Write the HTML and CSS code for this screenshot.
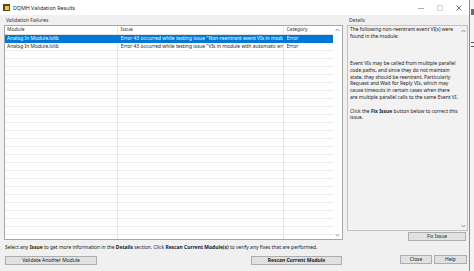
FILE: index.html
```html
<!DOCTYPE html>
<html lang="en">
<head>
  <meta charset="UTF-8">
  <title>DQMH Validation Results</title>
  <link rel="stylesheet" href="styles.css">
</head>
<body>

  <div class="window">
    <div class="titlebar">
      <span class="app-icon"><span class="app-icon-inner"></span></span>
      <span class="title">DQMH Validation Results</span>
      <div class="controls">
        <svg class="ctl" width="8" height="8" viewBox="0 0 8 8"><path d="M1 4.5H7" stroke="#9a9a9a" stroke-width="0.8"/></svg>
        <svg class="ctl" width="8" height="8" viewBox="0 0 8 8"><rect x="1.5" y="1.5" width="5" height="5" fill="none" stroke="#c4c4c4" stroke-width="0.7"/></svg>
        <svg class="ctl" width="8" height="8" viewBox="0 0 8 8"><path d="M1.5 1.5L6.5 6.5M6.5 1.5L1.5 6.5" stroke="#555" stroke-width="0.8"/></svg>
      </div>
    </div>

    <div class="main">
      <div class="left">
        <div class="section-label">Validation Failures</div>
        <div class="grid">
          <div class="grid-body">
            <table class="results">
              <colgroup>
                <col class="col-module">
                <col class="col-issue">
                <col class="col-category">
              </colgroup>
              <thead>
                <tr>
                  <th>Module</th>
                  <th>Issue</th>
                  <th>Category</th>
                </tr>
              </thead>
              <tbody id="rows">
                <tr class="selected">
                  <td><span class="cell">Analog In Module.lvlib</span></td>
                  <td><span class="cell">Error 43 occurred while testing issue "Non-reentrant event VIs in module"</span></td>
                  <td><span class="cell">Error</span></td>
                </tr>
                <tr>
                  <td><span class="cell">Analog In Module.lvlib</span></td>
                  <td><span class="cell">Error 43 occurred while testing issue "VIs in module with automatic error handling"</span></td>
                  <td><span class="cell">Error</span></td>
                </tr>
              </tbody>
            </table>
          </div>
          <div class="vscroll">
            <svg width="7" height="6" viewBox="0 0 7 6"><path d="M1.5 4L3.5 2L5.5 4" fill="none" stroke="#777" stroke-width="0.8"/></svg>
            <svg width="7" height="6" viewBox="0 0 7 6"><path d="M1.5 2L3.5 4L5.5 2" fill="none" stroke="#777" stroke-width="0.8"/></svg>
          </div>
        </div>
        <p class="hint">Select any <b>Issue</b> to get more information in the <b>Details</b> section. Click <b>Rescan Current Module(s)</b> to verify any fixes that are performed.</p>
        <div class="actions">
          <button class="btn btn-validate">Validate Another Module</button>
          <button class="btn btn-rescan">Rescan Current Module</button>
        </div>
      </div>

      <div class="right">
        <div class="section-label">Details</div>
        <div class="details">
          <div class="details-text">
            <p>The following non-reentrant event VI(s) were found in the module:</p>
            <p class="gap3">Event VIs may be called from multiple parallel code paths, and since they do not maintain state, they should be reentrant. Particularly Request and Wait for Reply VIs, which may cause timeouts in certain cases when there are multiple parallel calls to the same Event VI.</p>
            <p class="gap1">Click the <b>Fix Issue</b> button below to correct this issue.</p>
          </div>
          <div class="vscroll details-scroll">
            <svg width="7" height="6" viewBox="0 0 7 6"><path d="M1.5 4L3.5 2L5.5 4" fill="none" stroke="#777" stroke-width="0.8"/></svg>
            <svg width="7" height="6" viewBox="0 0 7 6"><path d="M1.5 2L3.5 4L5.5 2" fill="none" stroke="#777" stroke-width="0.8"/></svg>
          </div>
        </div>
        <div class="fix-row">
          <button class="btn btn-fix">Fix Issue</button>
        </div>
        <div class="dialog-buttons">
          <button class="btn btn-close">Close</button>
          <button class="btn btn-help">Help</button>
        </div>
      </div>
    </div>
  </div>
  <div class="behind">
    <span class="behind-mark"></span>
    <span class="behind-lines"></span>
  </div>

  <script>
    // pad the listbox with empty rows so the grid lines run to the bottom
    const rows = document.getElementById("rows");
    for (let i = 0; i < 26; i++) {
      const tr = document.createElement("tr");
      for (let c = 0; c < 3; c++) {
        tr.appendChild(document.createElement("td"));
      }
      rows.appendChild(tr);
    }
  </script>
</body>
</html>
```

FILE: styles.css
```css
body {
  margin: 0;
  background-color: #e9e9e9;
  font-family: 'Noto Sans', 'Liberation Sans', sans-serif;
  font-size: 4.95px;
  color: #1a1a1a;
  display: flex;
  width: 474px;
  height: 271px;
  overflow: hidden;
}

.window {
  width: 469px;
  height: 271px;
  background: #f0f0f0;
  border-right: 1px solid #8c8c8c;
  display: flex;
  flex-direction: column;
  flex-shrink: 0;
}

.titlebar {
  height: 15px;
  background: #fff;
  display: flex;
  align-items: center;
  padding-left: 3px;
  flex-shrink: 0;
}

.app-icon {
  width: 7px;
  height: 7px;
  background: #5a4a20;
  display: flex;
  align-items: center;
  justify-content: center;
  margin-right: 3px;
}

.app-icon-inner {
  width: 4px;
  height: 4px;
  background: #e7c44a;
}

.title {
  font-size: 5.3px;
  color: #222;
}

.controls {
  margin-left: auto;
  display: flex;
  gap: 11px;
  margin-right: 6px;
}

.main {
  display: flex;
  gap: 4px;
  padding-left: 4px;
  flex: 1;
}

.left {
  width: 339px;
  display: flex;
  flex-direction: column;
}

.right {
  width: 121px;
  display: flex;
  flex-direction: column;
}

.section-label {
  height: 10px;
  line-height: 10px;
  padding-left: 2px;
  color: #333;
}

.grid {
  height: 213px;
  border: 1px solid #a6a6a6;
  background: #fff;
  display: flex;
}

.grid-body {
  width: 329px;
  overflow: hidden;
}

.results {
  width: 329px;
  table-layout: fixed;
  border-collapse: collapse;
}

.col-module { width: 112px; }
.col-issue { width: 166px; }
.col-category { width: 51px; }

.results th,
.results td {
  height: 8px;
  padding: 0 0 0 3px;
  line-height: 7px;
  font-weight: normal;
  text-align: left;
  white-space: nowrap;
  overflow: hidden;
  border-right: 1px solid #e6e6e6;
  border-bottom: 1px solid #ececec;
  box-sizing: border-box;
}

.results .cell {
  display: block;
  overflow: hidden;
}

.results th {
  border-bottom: 1px solid #e0e0e0;
  color: #333;
}

.results th:first-child,
.results td:first-child {
  padding-left: 2px;
}

.results tr.selected td {
  background: #0078d7;
  color: #fff;
  border-right-color: #0078d7;
  border-bottom-color: #0078d7;
}

.vscroll {
  width: 9px;
  display: flex;
  flex-direction: column;
  justify-content: space-between;
  align-items: center;
  padding: 1px 0;
}

.hint {
  margin: 3px 0 0 1px;
  height: 8px;
  line-height: 8px;
  white-space: nowrap;
}

.hint b {
  font-weight: bold;
}

.actions {
  display: flex;
  justify-content: space-between;
  margin-top: 5px;
  padding: 0 1px;
}

.btn {
  height: 9px;
  padding: 0;
  background: #e1e1e1;
  border: 1px solid #adadad;
  font-family: inherit;
  font-size: 4.95px;
  color: #1a1a1a;
  line-height: 7px;
}

.btn-validate { width: 92px; }

.btn-rescan {
  width: 91px;
  font-weight: bold;
}

.details {
  height: 204px;
  border: 1px solid #c2c2c2;
  background: #f2f2f2;
  display: flex;
}

.details-text {
  flex: 1;
  padding: 0 1px 0 2px;
  line-height: 6.8px;
}

.details-text p {
  margin: 0;
}

.details-text .gap3 {
  margin-top: 20.4px;
}

.details-text .gap1 {
  margin-top: 6.8px;
}

.details-scroll {
  width: 8px;
  padding: 2px 0 1px;
}

.fix-row {
  display: flex;
  justify-content: flex-end;
  margin-top: 1px;
  padding-right: 2px;
}

.btn-fix { width: 58px; }

.dialog-buttons {
  display: flex;
  justify-content: flex-end;
  gap: 2px;
  margin-top: 14px;
  padding-right: 1px;
}

.btn-close { width: 32px; }
.btn-help { width: 33px; }

.behind {
  flex: 1;
  position: relative;
  background: #f4f4f4;
}

.behind-mark {
  position: absolute;
  left: 1px;
  top: 9px;
  width: 3px;
  height: 6px;
  background: #6b6b6b;
}

.behind-lines {
  position: absolute;
  left: 1px;
  top: 42px;
  width: 3px;
  height: 3px;
  border-top: 1px solid #555;
  border-bottom: 1px solid #555;
}
```
